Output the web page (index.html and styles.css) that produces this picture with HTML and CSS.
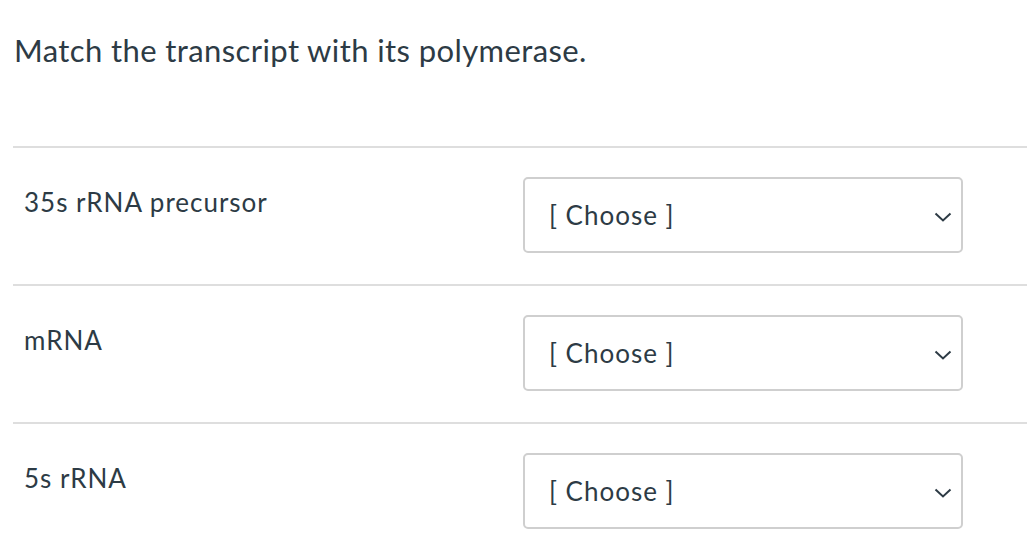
FILE: index.html
```html
<!DOCTYPE html>
<html>
<head>
<meta charset="utf-8">
<link rel="stylesheet" href="styles.css">
</head>
<body>
<div class="question">
  <h1 class="title">Match the transcript with its polymerase.</h1>
  <div class="answers">
    <div class="row">
      <div class="label">35s rRNA precursor</div>
      <div class="select"><span>[ Choose ]</span>
        <svg class="chev" width="18" height="10" viewBox="0 0 18 10"><path d="M1.5 1.5 L9 8.5 L16.5 1.5" fill="none" stroke="#2d3b45" stroke-width="2"/></svg>
      </div>
    </div>
    <div class="row">
      <div class="label">mRNA</div>
      <div class="select"><span>[ Choose ]</span>
        <svg class="chev" width="18" height="10" viewBox="0 0 18 10"><path d="M1.5 1.5 L9 8.5 L16.5 1.5" fill="none" stroke="#2d3b45" stroke-width="2"/></svg>
      </div>
    </div>
    <div class="row">
      <div class="label">5s rRNA</div>
      <div class="select"><span>[ Choose ]</span>
        <svg class="chev" width="18" height="10" viewBox="0 0 18 10"><path d="M1.5 1.5 L9 8.5 L16.5 1.5" fill="none" stroke="#2d3b45" stroke-width="2"/></svg>
      </div>
    </div>
  </div>
</div>
</body>
</html>
```
FILE: styles.css
```css
html, body {
  margin: 0;
  padding: 0;
  background: #fff;
}
body {
  font-family: Lato, "Liberation Sans", sans-serif;
  color: #2d3b45;
}
.question {
  padding-left: 13px;
}
.title {
  margin: 0;
  padding: 27px 0 0 1px;
  font-size: 31px;
  letter-spacing: 0.4px;
  font-weight: 400;
  line-height: 46px;
  height: 120px;
  box-sizing: border-box;
}
.answers {
  margin-top: 26px;
}
.row {
  border-top: 2px solid #dedede;
  display: flex;
  align-items: flex-start;
  height: 136px;
}
.label {
  width: 499px;
  padding: 38px 0 0 11px;
  font-size: 26px;
  letter-spacing: 1px;
  line-height: 32px;
}
.select {
  margin-top: 29px;
  width: 440px;
  height: 76px;
  box-sizing: border-box;
  border: 2px solid #cfcfcf;
  border-radius: 5px;
  display: flex;
  align-items: center;
  justify-content: space-between;
  padding: 0 9px 0 24px;
  font-size: 26px;
  letter-spacing: 1px;
}
.chev {
  display: block;
  margin-top: 4px;
}
```
